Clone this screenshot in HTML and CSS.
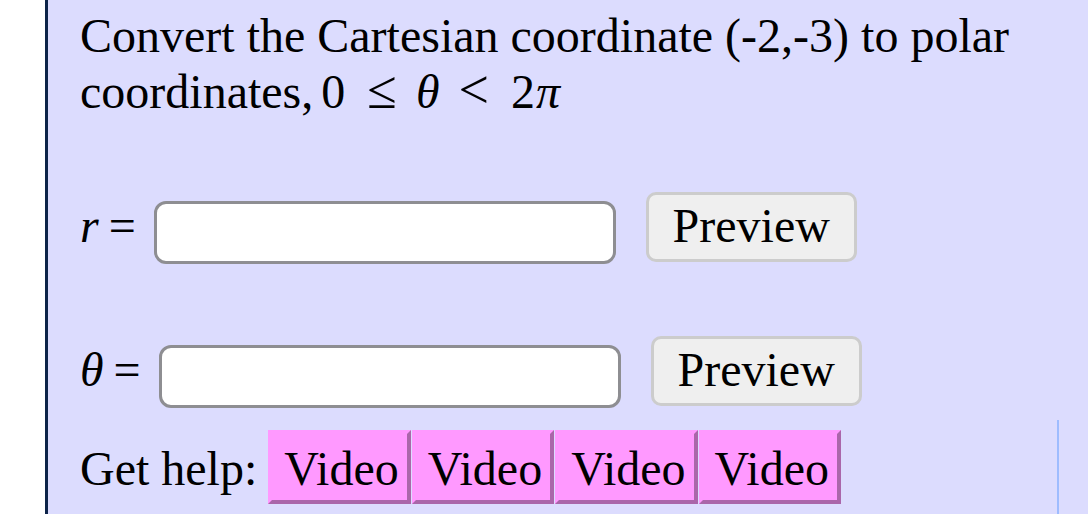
FILE: index.html
```html
<!DOCTYPE html>
<html lang="en">
<head>
    <meta charset="UTF-8">
    <title>Polar coordinates</title>
    <link rel="stylesheet" href="styles.css">
</head>
<body>
    <div class="problem">
        <p class="question">Convert the Cartesian coordinate (-2,-3) to polar coordinates, <span class="math"><span class="mn">0</span><span class="mo le">&le;</span><span class="mi">&theta;</span><span class="mo lt">&lt;</span><span class="mn">2</span><span class="mi pi">&pi;</span></span></p>

        <div class="answer-row">
            <span class="answer-label"><span class="mi">r</span><span class="eq">=</span></span>
            <input class="answer-input" type="text">
            <button class="preview-btn" type="button">Preview</button>
        </div>

        <div class="answer-row">
            <span class="answer-label"><span class="mi">&theta;</span><span class="eq">=</span></span>
            <input class="answer-input" type="text">
            <button class="preview-btn" type="button">Preview</button>
        </div>

        <div class="help-row">
            <span class="help-label">Get help:</span>
            <span class="video-btns">
                <span class="video-btn">Video</span><span class="video-btn">Video</span><span class="video-btn">Video</span><span class="video-btn">Video</span>
            </span>
        </div>

        <!-- stray scroll mark on the right -->
        <div class="scroll-mark"></div>
    </div>
</body>
</html>
```

FILE: styles.css
```css
html, body {
    margin: 0;
    background: #ffffff;
}
body {
    font-family: "Liberation Serif", "Times New Roman", serif;
    font-size: 48px;
    color: #000;
}
.problem {
    position: relative; /* for the scroll mark */
    margin-left: 45px;
    min-height: 514px;
    box-sizing: border-box;
    padding: 8px 0 0 32px;
    background-color: #dcdcfe;
    border-left: 3px solid #0d2449;
    overflow: hidden;
}
.question {
    margin: 0;
    line-height: 56px;
    width: 960px;
}
.math .mn,
.math .mi {
    display: inline-block;
}
.math .mn:first-child {
    margin-left: -4px;
}
.math .mo {
    font-size: 54px;
    line-height: 0;
}
.math .le {
    margin: 0 19px 0 22px;
}
.math .lt {
    margin: 0 22px 0 19px;
}
.math .mi {
    font-style: italic;
}
.math .pi {
    margin-left: 1px;
}
.answer-row {
    display: flex;
    align-items: flex-start;
    height: 72px;
    margin-top: 72px;
}
.answer-row + .answer-row {
    margin-top: 72px;
}
.answer-label {
    display: flex;
    margin-top: 6px;
    line-height: 55px;
}
.answer-label .mi {
    font-style: italic;
}
.answer-label .eq {
    margin-left: 10px;
}
.answer-input {
    box-sizing: border-box;
    width: 462px;
    height: 63px;
    margin: 9px 0 0 18px;
    border: 3px solid #8e8e92;
    border-radius: 12px;
    background: #ffffff;
    font-size: 24px;
}
.preview-btn {
    box-sizing: border-box;
    width: 211px;
    height: 70px;
    margin-left: 30px;
    padding: 0 0 4px;
    background-color: #efefef;
    border: 3px solid #cccccc;
    border-radius: 10px;
    font-family: "Liberation Serif", "Times New Roman", serif;
    font-size: 48px;
    color: #000;
}
.help-row {
    display: flex;
    align-items: baseline;
    margin-top: 22px;
}
.help-label {
    line-height: 55px;
}
.video-btns {
    display: flex;
    align-items: baseline;
    margin-left: 11px;
}
.video-btn {
    display: inline-block;
    line-height: 55px;
    padding: 7px 8px 4px 12px;
    background-color: #ff99ff;
    border: 4px solid;
    border-color: #ff99ff #aa66aa #aa66aa #ff99ff;
    margin-right: 1px;
}
.scroll-mark {
    position: absolute;
    left: 1009px;
    top: 420px;
    width: 2px;
    height: 94px;
    background-color: #8fb4ff;
    opacity: 0.8;
}
```
